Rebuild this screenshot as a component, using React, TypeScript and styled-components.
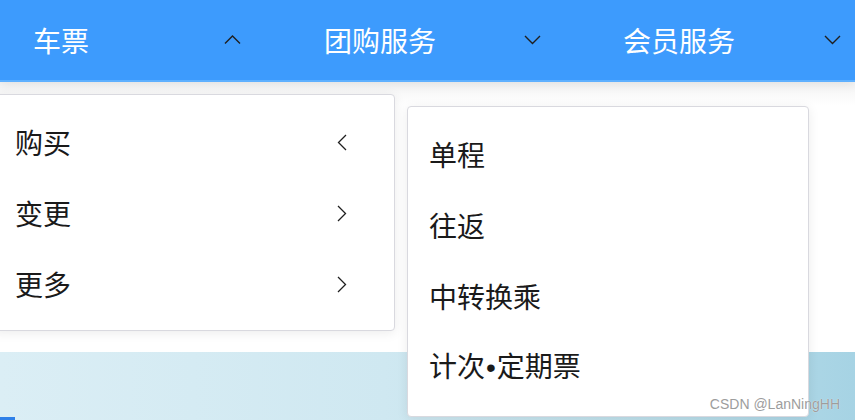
import { styled, createGlobalStyle } from 'styled-components';

const GlobalStyle = createGlobalStyle`
    html, body {
        margin: 0;
        padding: 0;
        background: #ffffff;
    }
    body {
        font-family: "Noto Sans CJK SC", "Noto Sans", sans-serif;
    }
`;

type Dir = 'up' | 'down' | 'left' | 'right';

function Chevron({ dir, color = '#1f1f1f' }: { dir: Dir; color?: string }) {
    if (dir === 'up' || dir === 'down') {
        const d = dir === 'up' ? 'M1 8.5 L8.5 1 L16 8.5' : 'M1 1 L8.5 8.5 L16 1';
        return (
            <svg width="17" height="10" viewBox="0 0 17 10">
                <path d={d} fill="none" stroke={color} strokeWidth="1.4" />
            </svg>
        );
    }
    const d = dir === 'left' ? 'M9 1 L1.5 8.5 L9 16' : 'M1 1 L8.5 8.5 L1 16';
    return (
        <svg width="10" height="17" viewBox="0 0 10 17">
            <path d={d} fill="none" stroke={color} strokeWidth="1.3" />
        </svg>
    );
}

const navItems = [
    { label: '车票', open: true, pad: 33 },
    { label: '团购服务', open: false, pad: 24 },
    { label: '会员服务', open: false, pad: 23 },
];

const menuItems = [
    { label: '购买', open: true },
    { label: '变更', open: false },
    { label: '更多', open: false },
];

// "•" is drawn in a latin font so it stays narrow like the reference
const subItems: React.ReactNode[] = [
    '单程',
    '往返',
    '中转换乘',
    <>
        计次<Dot>•</Dot>定期票
    </>,
];

function App() {
    return (
        <>
            <GlobalStyle />
            <Page>
                <Header>
                    {navItems.map((n) => (
                        <NavItem key={n.label} $pad={n.pad}>
                            <NavLabel>{n.label}</NavLabel>
                            <Chevron dir={n.open ? 'up' : 'down'} />
                        </NavItem>
                    ))}
                </Header>
                <Body>
                    <Blank />
                    <Banner>
                        <BannerTab />
                    </Banner>
                </Body>

                <Menu>
                    {menuItems.map((m) => (
                        <MenuRow key={m.label}>
                            <span>{m.label}</span>
                            <Chevron dir={m.open ? 'left' : 'right'} />
                        </MenuRow>
                    ))}
                    <SubMenu>
                        {subItems.map((s, i) => (
                            <MenuRow key={i}>
                                <span>{s}</span>
                            </MenuRow>
                        ))}
                    </SubMenu>
                </Menu>

                <Watermark>CSDN @LanNingHH</Watermark>
            </Page>
        </>
    );
}

function Dot({ children }: { children: React.ReactNode }) {
    return <DotGlyph>{children}</DotGlyph>;
}

const DotGlyph = styled.span`
    font-family: "Liberation Sans", Arial, sans-serif;
    margin: 0 1px;
`;

const Page = styled.div`
    position: relative;
    width: 855px;
    height: 420px;
    overflow: hidden;
    display: flex;
    flex-direction: column;
    background: #ffffff;
`;

const Header = styled.div`
    flex: none;
    height: 80px;
    display: flex;
    background: #3d9bfd;
    border-bottom: 2px solid #5eb0ff;
    box-shadow: 0 3px 10px rgba(0, 0, 0, 0.07);
    position: relative;
    z-index: 1;
`;

const NavItem = styled.div<{ $pad: number }>`
    flex: none;
    width: 300px;
    box-sizing: border-box;
    padding-left: ${(p) => p.$pad}px;
    padding-right: 59px;
    display: flex;
    align-items: center;
    justify-content: space-between;
`;

const NavLabel = styled.span`
    color: #ffffff;
    font-size: 28px;
    line-height: 1;
    margin-top: -1px;
`;

const Body = styled.div`
    flex: 1;
    display: flex;
    flex-direction: column;
`;

const Blank = styled.div`
    height: 270px;
    background: linear-gradient(180deg, #f3f3f3 0px, #ffffff 24px);
`;

const Banner = styled.div`
    flex: 1;
    position: relative;
    background: linear-gradient(90deg, #dbeef5 0%, #cfe8f1 45%, #b9dde9 80%, #a6d3e4 100%);
`;

const BannerTab = styled.div`
    position: absolute;
    left: 0;
    bottom: 0;
    width: 15px;
    height: 3px;
    background: #2f80e8;
`;

const Panel = styled.div`
    background: #ffffff;
    border: 1px solid #d9d9df;
    border-radius: 4px;
    box-shadow: 0 2px 12px rgba(0, 0, 0, 0.08);
    box-sizing: border-box;
    width: 402px;
    padding: 12px 0 10px;
`;

const Menu = styled(Panel)`
    position: absolute;
    top: 94px;
    left: -7px;
    z-index: 2;
`;

const SubMenu = styled(Panel)`
    position: absolute;
    top: 11px;
    left: calc(100% + 13px);
    padding-bottom: 13px;
`;

const MenuRow = styled.div`
    height: 71px;
    display: flex;
    align-items: center;
    justify-content: space-between;
    padding: 0 47px 0 21px;
    font-size: 28px;
    color: #1a1a1a;
    white-space: nowrap;

    & > span {
        line-height: 1;
        margin-top: -2px;
    }
`;

const Watermark = styled.div`
    position: absolute;
    right: 15px;
    bottom: 8px;
    z-index: 3;
    font-family: "Liberation Sans", Arial, sans-serif;
    font-size: 14px;
    color: #9d9d9d;
    text-shadow: 0 0 1px #ffffff;
`;

export default App;
